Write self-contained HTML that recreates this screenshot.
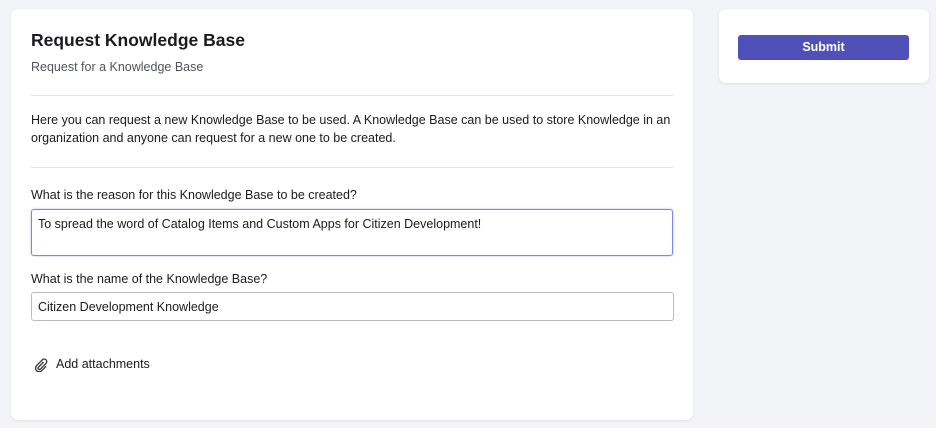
<!DOCTYPE html>
<html><head><style>
body{margin:0;width:936px;height:428px;background:#f3f4f7;font-family:"Liberation Sans",sans-serif;position:relative;overflow:hidden;color:#1b1b1f}
.card{position:absolute;background:#fff;border-radius:7px;box-shadow:0 1px 3px rgba(0,0,0,.08)}
.a{position:absolute;white-space:nowrap}
.hr{position:absolute;left:31px;width:642px;height:1px;background:#e2e3e6}
</style></head><body>
<div class="card" style="left:11px;top:9px;width:682px;height:411px"></div>
<div class="card" style="left:719px;top:9px;width:210px;height:74px"></div>
<div class="a" style="left:738px;top:35px;width:171px;height:25px;background:#4f51b8;border-radius:3px;color:#fff;font-size:12.5px;font-weight:bold;text-align:center;line-height:25px">Submit</div>
<div class="a" style="left:31px;top:30px;font-size:17.5px;font-weight:bold">Request Knowledge Base</div>
<div class="a" style="left:31px;top:60px;font-size:12.5px;color:#50545c">Request for a Knowledge Base</div>
<div class="hr" style="top:95px"></div>
<div class="a" style="left:31px;top:111px;font-size:12.5px;line-height:18px">Here you can request a new Knowledge Base to be used. A Knowledge Base can be used to store Knowledge in an<br>organization and anyone can request for a new one to be created.</div>
<div class="hr" style="top:167px"></div>
<div class="a" style="left:31px;top:188px;font-size:12.5px">What is the reason for this Knowledge Base to be created?</div>
<div class="a" style="left:31px;top:209px;width:640px;height:45px;border:1.5px solid #7d88e0;border-radius:3px;box-shadow:0 0 2px #b6bdf0"></div>
<div class="a" style="left:38px;top:217px;font-size:12.5px">To spread the word of Catalog Items and Custom Apps for Citizen Development!</div>
<div class="a" style="left:31px;top:272px;font-size:12.5px">What is the name of the Knowledge Base?</div>
<div class="a" style="left:31px;top:292px;width:641px;height:27px;border:1px solid #b9bcc2;border-radius:3px"></div>
<div class="a" style="left:38px;top:300px;font-size:12.5px">Citizen Development Knowledge</div>
<svg class="a" style="left:34px;top:358px" width="14" height="14" viewBox="0 0 14 14"><path d="M9.5 4L4.5 9.2a1.3 1.3 0 0 0 1.9 1.9l5.6-5.7a2.5 2.5 0 0 0-3.6-3.6L2.6 7.6a3.6 3.6 0 0 0 5.1 5.1L12 8.3" fill="none" stroke="#333" stroke-width="1.3"/></svg>
<div class="a" style="left:56px;top:357px;font-size:12.5px">Add attachments</div>
</body></html>
